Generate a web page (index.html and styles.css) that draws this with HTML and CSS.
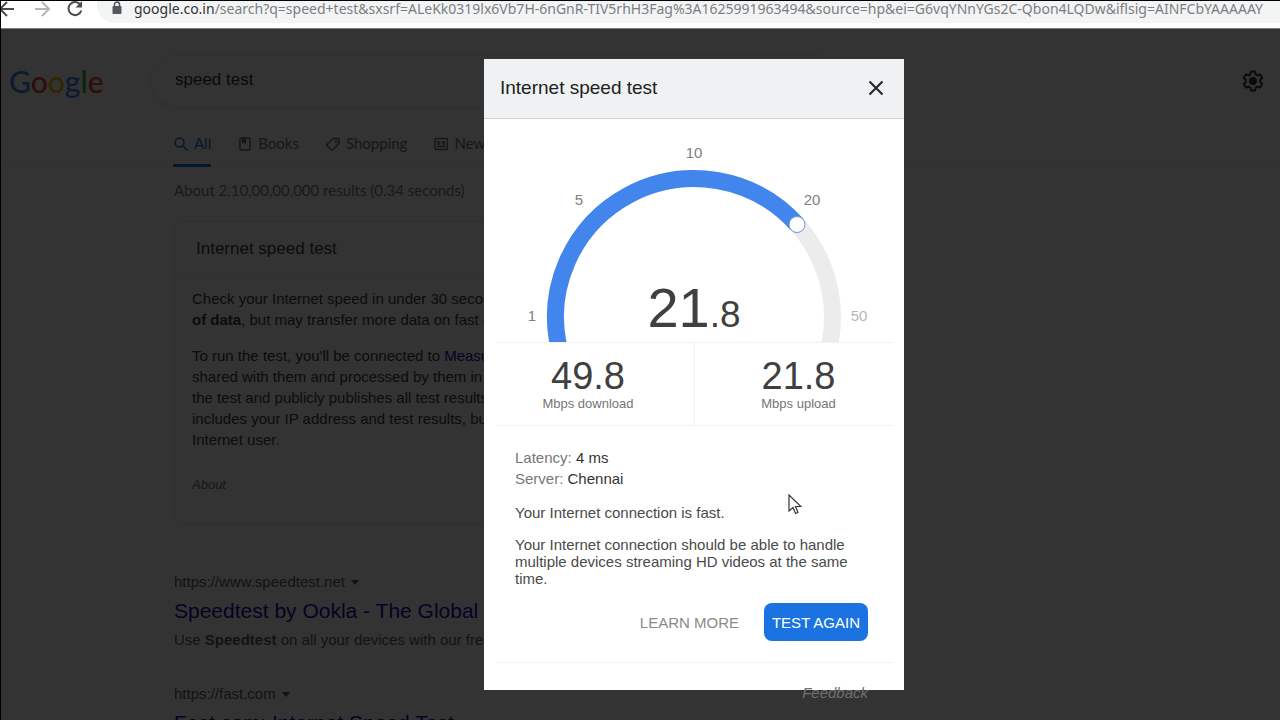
FILE: index.html
```html
<!DOCTYPE html>
<html lang="en">
<head>
<meta charset="utf-8">
<meta name="viewport" content="width=device-width, initial-scale=1">
<title>speed test - Google Search</title>
<link rel="stylesheet" href="styles.css">
</head>
<body>
<header class="toolbar">
  <button class="nav-btn" aria-label="Back"><svg width="18" height="18" viewBox="0 0 18 18"><path d="M16 9H2M9 2L2 9l7 7" fill="none" stroke="#4a4d50" stroke-width="2"/></svg></button>
  <button class="nav-btn" aria-label="Forward" disabled><svg width="18" height="18" viewBox="0 0 18 18"><path d="M2 9h14M9 2l7 7-7 7" fill="none" stroke="#b4b6b8" stroke-width="2"/></svg></button>
  <button class="nav-btn" aria-label="Reload"><svg width="18" height="18" viewBox="0 0 18 18"><path d="M14.500 5A6.500 6.500 0 1 0 15.300 10.500" fill="none" stroke="#4a4d50" stroke-width="2"/><path d="M16 1v6.500h-6.500z" fill="#4a4d50"/></svg></button>
  <div class="omnibox">
    <svg class="lock" width="10" height="14" viewBox="0 0 10 14"><path d="M2.500 6V3.500a2.500 2.500 0 0 1 5 0V6" fill="none" stroke="#55585c" stroke-width="1.500"/><rect x="0.500" y="5" width="9" height="8" rx="1" fill="#55585c"/></svg>
    <span class="url"><span class="host">google.co.in</span>/search?q=speed+test&amp;sxsrf=ALeKk0319lx6Vb7H-6nGnR-TIV5rhH3Fag%3A1625991963494&amp;source=hp&amp;ei=G6vqYNnYGs2C-Qbon4LQDw&amp;iflsig=AINFCbYAAAAAY</span>
  </div>
</header>
<div class="viewport">
  <main class="page">
    <div class="top">
      <a class="logo" href="#" aria-label="Google"><span class="b">G</span><span class="r">o</span><span class="y">o</span><span class="b">g</span><span class="g">l</span><span class="r">e</span></a>
      <input class="search" type="text" aria-label="Search" value="speed test">
      <button class="gear" aria-label="Settings"><svg width="24" height="24" viewBox="0 0 24 24" fill="none" stroke="#333" stroke-width="2" stroke-linejoin="round"><path d="M10 2.500h4l.6 2.800 1.900 1.100 2.700-.9 2 3.500-2.100 1.900v2.200l2.100 1.900-2 3.500-2.700-.9-1.900 1.100-.6 2.800h-4l-.6-2.800-1.900-1.100-2.700.9-2-3.500 2.100-1.900v-2.200L2.800 9l2-3.500 2.700.9 1.900-1.100z"/><circle cx="12" cy="12" r="3" fill="#333"/></svg></button>
    </div>
    <nav class="tabs">
      <a class="tab active" href="#"><svg width="14" height="14" viewBox="0 0 14 14" fill="none" stroke="currentColor" stroke-width="1.500"><circle cx="5.500" cy="5.500" r="4.500"/><path d="M9 9l4.500 4.500"/></svg>All</a>
      <a class="tab" href="#"><svg width="14" height="14" viewBox="0 0 14 14"><rect x="2" y="1" width="10" height="12" rx="1" fill="none" stroke="currentColor" stroke-width="1.500"/><path d="M4 1h4v6L6 5.500 4 7z" fill="currentColor"/></svg>Books</a>
      <a class="tab" href="#"><svg width="14" height="14" viewBox="0 0 14 14"><path d="M7 1.500h5a1 1 0 0 1 1 1v4L7 12.500a1.500 1.500 0 0 1-2 0L1.500 9a1.500 1.500 0 0 1 0-2z" fill="none" stroke="currentColor" stroke-width="1.500"/><circle cx="10" cy="4.500" r="1.200" fill="currentColor"/></svg>Shopping</a>
      <a class="tab" href="#"><svg width="14" height="14" viewBox="0 0 14 14" fill="none" stroke="currentColor" stroke-width="1.500"><rect x="1" y="1.500" width="12.500" height="11" rx="1"/><path d="M3 5h3.500M3 7h3.500M3 9.500h8.500M8 5h3.500M8 7h3.500"/></svg>News</a>
    </nav>
    <div class="results">
      <p class="stats-line">About 2,10,00,00,000 results (0.34 seconds)</p>
      <section class="card">
        <h2>Internet speed test</h2>
        <div class="card-body">
          <p>Check your Internet speed in under 30 seconds. The test usually transfers less than <b>40 MB<br>of data</b>, but may transfer more data on fast connections.</p>
          <p>To run the test, you'll be connected to <a href="#">Measurement Lab</a> (M-Lab) and your IP address will be<br>shared with them and processed by them in accordance with their privacy policy. M-Lab conducts<br>the test and publicly publishes all test results to promote Internet research. Published information<br>includes your IP address and test results, but doesn't include any other information about you as an<br>Internet user.</p>
          <a class="about" href="#">About</a>
        </div>
      </section>
      <article class="result">
        <div class="cite">https://www.speedtest.net <span class="caret"></span></div>
        <h3><a href="#">Speedtest by Ookla - The Global Broadband Speed Test</a></h3>
        <p>Use <b>Speedtest</b> on all your devices with our free desktop and mobile apps.</p>
      </article>
      <article class="result">
        <div class="cite">https://fast.com <span class="caret"></span></div>
        <h3><a href="#">Fast.com: Internet Speed Test</a></h3>
      </article>
    </div>
  </main>
  <div class="overlay">
    <section class="dialog" role="dialog" aria-labelledby="dialog-title">
      <header class="dialog-head">
        <h1 id="dialog-title">Internet speed test</h1>
        <button class="close" aria-label="Close"><svg width="16" height="16" viewBox="0 0 16 16"><path d="M1.500 1.500l13 13M14.500 1.500l-13 13" stroke="#222" stroke-width="2"/></svg></button>
      </header>
      <svg class="gauge" viewBox="0 0 420 223" role="img" aria-label="21.8 Mbps">
        <circle cx="210" cy="198" r="138.500" fill="none" stroke="#ececec" stroke-width="17"/>
        <path d="M76 233A138.500 138.500 0 0 1 313 105.500" fill="none" stroke="#4285ec" stroke-width="17"/>
        <circle cx="313" cy="105.500" r="8" fill="#fff" stroke="#6f93cf" stroke-width="1"/>
        <g class="ticks"><text x="48" y="202">1</text><text x="95" y="86">5</text><text x="210" y="39">10</text><text x="328" y="86">20</text><text class="far" x="375" y="202">50</text></g>
        <text class="reading" x="210" y="208">21<tspan class="decimal">.8</tspan></text>
      </svg>
      <div class="speeds">
        <div class="speed"><strong>49.8</strong><span>Mbps download</span></div>
        <div class="speed"><strong>21.8</strong><span>Mbps upload</span></div>
      </div>
      <div class="details">
        <p class="meta"><span>Latency:</span> 4 ms<br><span>Server:</span> Chennai</p>
        <p>Your Internet connection is fast.</p>
        <p>Your Internet connection should be able to handle multiple devices streaming HD videos at the same time.</p>
      </div>
      <div class="actions">
        <button class="learn">LEARN MORE</button>
        <button class="again">TEST AGAIN</button>
      </div>
      <a class="feedback" href="#">Feedback</a>
      <svg class="pointer" width="14" height="22" viewBox="0 0 14 22"><path d="M1 1v16l4-3.500 2.500 6 2.500-1-2.500-6H13z" fill="#fff" stroke="#333" stroke-width="1.200"/></svg>
    </section>
  </div>
</div>
</body>
</html>
```
FILE: styles.css
```css
* { box-sizing: border-box; }
body { margin: 0; height: 100vh; display: flex; flex-direction: column; overflow: hidden; font-family: "Liberation Sans", Arial, sans-serif; font-size: 15px; color: #3c3d40; border-left: 1px solid #000; }
button { border: 0; background: none; padding: 0; font-family: inherit; cursor: pointer; }
a { text-decoration: none; color: inherit; }
p, h1, h2, h3 { margin: 0; font-weight: 400; }
svg { display: block; }

.toolbar { flex: none; height: 29px; display: flex; background: #fff; border-top: 1px solid #000; border-bottom: 1px solid #7d8080; overflow: hidden; }
.nav-btn { flex: none; width: 33px; height: 16px; padding-right: 19px; display: flex; align-items: center; }
.nav-btn svg { flex: none; margin-left: -3px; }
.nav-btn + .nav-btn svg { margin-left: -1px; }
.omnibox { flex: 1; min-width: 0; height: 22px; margin-left: -3px; padding-left: 15px; display: flex; align-items: flex-start; gap: 12px; background: linear-gradient(#f1f3f4, #f4f6f6); border-bottom-left-radius: 18px; white-space: nowrap; }
.lock { flex: none; }
.url { font: 14px/16px "Noto Sans", "Open Sans", sans-serif; color: #7b7e81; }
.host { color: #333; }

.viewport { flex: 1; min-height: 0; position: relative; overflow: hidden; background: #fff; }
.top { display: flex; align-items: center; height: 104px; padding: 0 15px 0 8px; }
.logo { width: 143px; font: 500 30px/38px Lato, sans-serif; }
.b { color: #4285f4; } .r { color: #ea4335; } .y { color: #fbbc05; } .g { color: #34a853; }
.search { width: 690px; height: 50px; border: 0; border-radius: 25px; padding: 0 23px 2px; font: 17px "Liberation Sans", Arial, sans-serif; color: #333; box-shadow: 0 1px 6px rgba(32, 33, 36, .14); }
.gear { margin-left: auto; }
.tabs { display: flex; gap: 26px; height: 34px; padding-left: 172px; border-bottom: 1px solid #f1f1f1; font: 15px/20px Lato, sans-serif; color: #6c7074; }
.tab { display: flex; gap: 6px; height: 34px; }
.tab svg { margin: 4px 0 0 1px; }
.active { color: #1a73e8; border-bottom: 3px solid #1a73e8; }
.results { width: 860px; padding-left: 173px; }
.stats-line { padding: 13px 0 15px; font: 15px/20px Lato, sans-serif; color: #7c8186; }
.card { margin-top: 6px; height: 303px; border: 1px solid #e6e8ea; border-radius: 8px; }
.card h2 { height: 52px; padding-left: 21px; font-size: 17px; line-height: 54px; border-bottom: 1px solid #ededed; }
.card-body { padding: 14px 17px; line-height: 21px; white-space: nowrap; overflow: hidden; }
.card-body p { margin-bottom: 15px; }
.card-body a { color: #1a0dab; }
.card-body .about { display: block; margin-top: 24px; font-size: 13px; font-style: italic; color: #70757a; }
.result { margin-top: 47px; height: 66px; line-height: 22px; color: #5d6166; white-space: nowrap; }
.result + .result { margin-top: 46px; }
.cite { display: flex; align-items: center; gap: 6px; }
.caret { border: 4px solid transparent; border-top: 5px solid #555; border-bottom: 0; }
.result h3 { font-size: 21px; line-height: 36px; }
.result h3 a { color: #1a0dab; }

.overlay { position: absolute; inset: 0; display: flex; justify-content: center; align-items: flex-start; padding: 30px 0 0 107px; background: rgba(0, 0, 0, .8); }
.dialog { position: relative; width: 420px; height: 631px; background: #fff; color: #202124; }
.dialog-head { height: 60px; padding: 0 20px 2px 16px; display: flex; justify-content: space-between; align-items: center; background: #eff1f2; border-bottom: 1px solid #d2d4d5; }
.dialog-head h1 { font-size: 19px; line-height: 24px; }
.gauge { width: 100%; overflow: hidden; }
.ticks { font-size: 15px; text-anchor: middle; fill: #808080; }
.ticks .far { fill: #b8b8b8; }
.reading { font-size: 56px; text-anchor: middle; fill: #404040; }
.decimal { font-size: 37px; }
.speeds { display: grid; grid-template-columns: 1fr 1fr; height: 84px; margin: 0 10px 0 12px; border: solid #f2f2f2; border-width: 1px 0; }
.speed { padding: 13px 0 0 8px; display: flex; flex-direction: column; align-items: center; }
.speed:first-child { border-right: 1px solid #f2f2f2; padding: 13px 14px 0 0; }
.speed strong { font-weight: 400; font-size: 38px; line-height: 40px; color: #404040; }
.speed span { font-size: 13px; line-height: 15px; color: #757575; }
.details { padding: 21px 40px 0 31px; line-height: 17px; color: #4a4a4a; }
.details p { margin-bottom: 15px; }
.details .meta { line-height: 21px; color: #333; }
.meta span { color: #777; }
.actions { display: flex; justify-content: flex-end; align-items: center; gap: 25px; margin: 0 10px 0 12px; padding: 1px 26px 21px 0; border-bottom: 1px solid #f2f2f2; }
.actions button { font-size: 15px; }
.learn { color: #8a8a8a; }
.actions .again { width: 104px; height: 38px; border-radius: 8px; background: #1a73e0; color: #fff; }
.feedback { position: absolute; right: 36px; bottom: -11px; font-size: 15px; line-height: 17px; font-style: italic; color: #707070; }
.pointer { position: absolute; left: 304px; top: 435px; }
```
